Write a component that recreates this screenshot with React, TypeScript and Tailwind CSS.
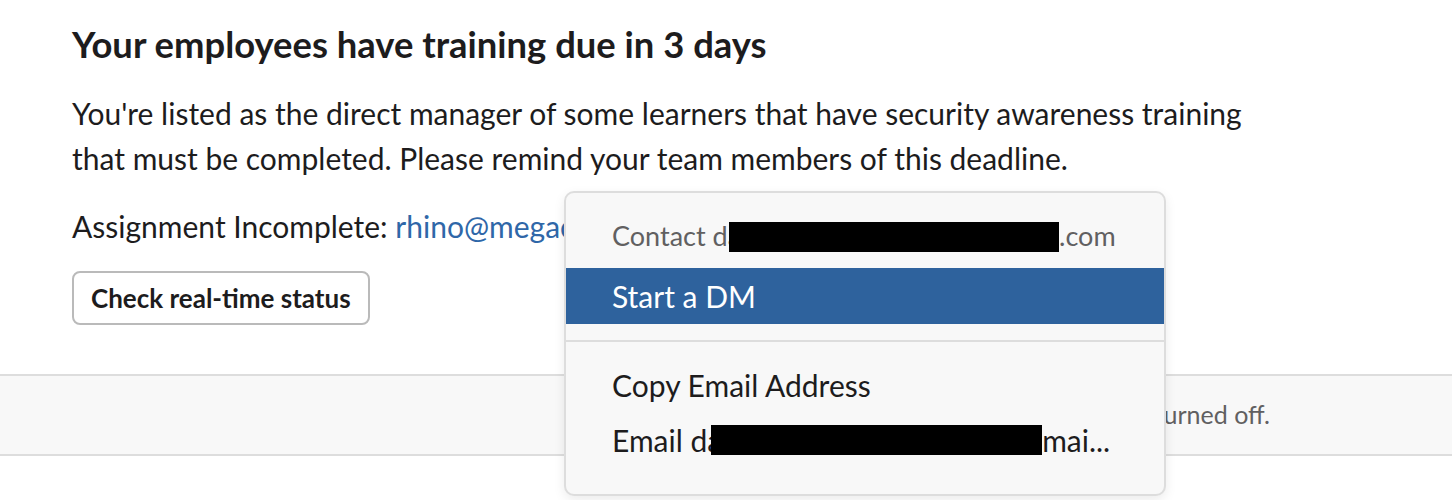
export default function App() {
  return (
    <div className="relative h-[500px] w-full overflow-hidden bg-white font-['Lato',sans-serif] text-[#1d1c1d]">
      <div className="px-[72px] pt-[24px]">
        <h1 className="text-[36.4px] font-bold leading-[40px]">Your employees have training due in 3 days</h1>
        <p className="mt-[27px] w-[1200px] text-[30px] leading-[45px]">
          You're listed as the direct manager of some learners that have security awareness training that must be
          completed. Please remind your team members of this deadline.
        </p>
        <p className="mt-[23px] text-[30px] leading-[45px]">
          Assignment Incomplete: <span className="text-[#2f67a8]">rhino@megacorp.com</span>
        </p>
        <button className="mt-[22px] h-[54px] rounded-[8px] border-2 border-[#bababa] bg-white px-[17px] text-[26px] font-bold">
          Check real-time status
        </button>
      </div>
      <div className="mt-[49px] flex h-[82px] items-center justify-end border-y-2 border-[#dddddd] bg-[#f8f8f8] pr-[182px]">
        <span className="whitespace-nowrap text-[25px] text-[#616061]">
          Notifications from this app have been turned off.
        </span>
      </div>

      <div className="absolute left-[564px] top-[191px] w-[602px] rounded-[10px] border-2 border-[#dddddd] bg-[#f8f8f8] pb-[27px] pt-[12px] shadow-[0_4px_12px_rgba(0,0,0,0.08)]">
        <div className="flex h-[63px] items-center whitespace-nowrap px-[46px] text-[27px] text-[#616061]">
          Contact da
          <span className="ml-[-12px] inline-block h-[30px] w-[330px] bg-black" />
          .com
        </div>
        <div className="flex h-[56px] items-center whitespace-nowrap bg-[#2e629d] px-[46px] text-[30px] text-white">
          Start a DM
        </div>
        <div className="mb-[15px] mt-[16px] h-[2px] bg-[#dddddd]" />
        <div className="flex h-[56px] items-center whitespace-nowrap px-[46px] text-[30px]">Copy Email Address</div>
        <div className="flex h-[54px] items-center whitespace-nowrap px-[46px] text-[30px]">
          Email da
          <span className="ml-[-11px] inline-block h-[30px] w-[331px] bg-black" />
          mai...
        </div>
      </div>
    </div>
  );
}
